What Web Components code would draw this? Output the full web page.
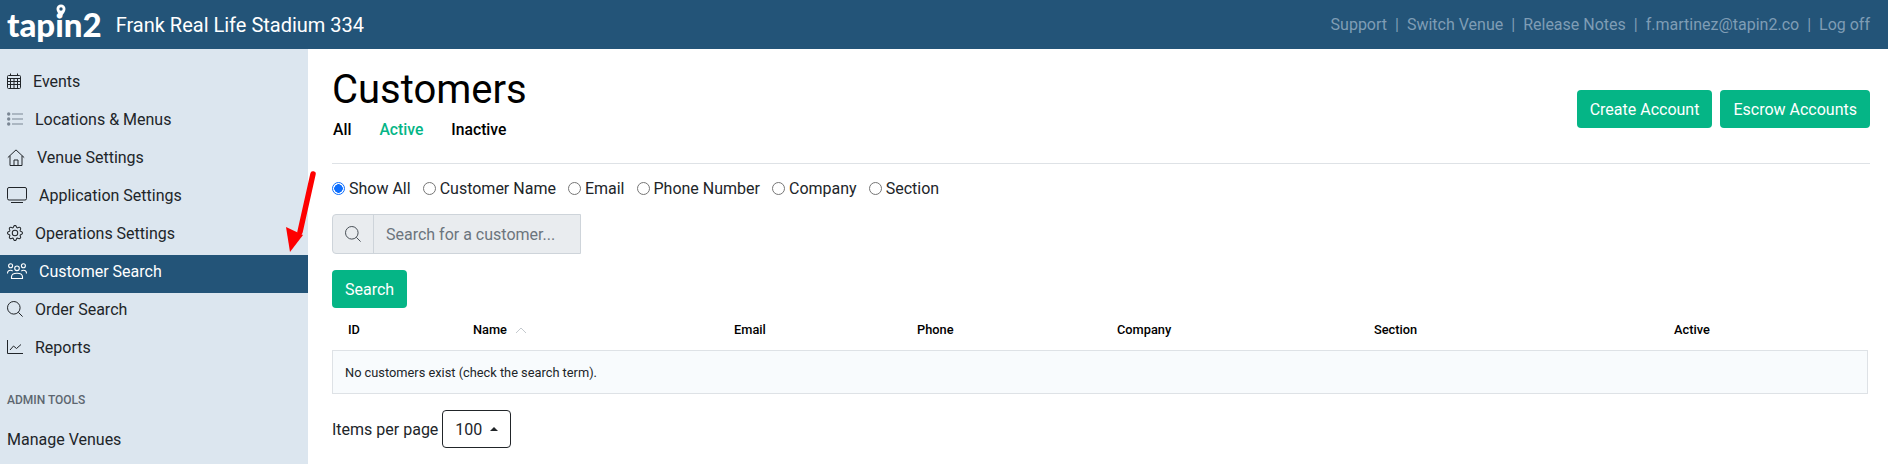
<!doctype html>
<html>
<head>
<meta charset="utf-8">
<title>Customers</title>
<style>
  html, body { margin: 0; height: 100%; background: #fff; overflow: hidden; }
  body { font-family: Roboto, "Liberation Sans", sans-serif; color: #212529; }
</style>
</head>
<body>
<app-shell>
  <top-bar slot="top"></top-bar>
  <side-nav slot="side"></side-nav>
  <customers-page slot="main"></customers-page>
</app-shell>

<script>
function define(name, html) {
  customElements.define(name, class extends HTMLElement {
    connectedCallback() {
      if (this.shadowRoot) return;
      this.attachShadow({ mode: 'open' }).innerHTML = typeof html === 'function' ? html(this) : html;
    }
  });
}

const ICONS = {
  calendar: '<svg width="14" height="16" viewBox="0 0 14 16" fill="none" stroke="#212529"><rect x=".5" y="2.500" width="13" height="13" rx="1"/><path d="M.5 5.500h13M.5 8.500h13M.5 11.500h13M3.500 5.500v10M7 5.500v10M10.500 5.500v10M3.500 .5v2M10.500 .5v2"/></svg>',
  list: '<svg width="16" height="14" viewBox="0 0 16 14" fill="none" stroke="#7b8794"><path d="M5 2h11M5 7h11M5 12h11"/><g fill="#7b8794" stroke="none"><circle cx="1.700" cy="2" r="1.700"/><circle cx="1.700" cy="7" r="1.700"/><circle cx="1.700" cy="12" r="1.700"/></g></svg>',
  house: '<svg width="18" height="17" viewBox="0 0 18 17" fill="none" stroke="#212529"><path d="M.8 8.600 9 .9l8.200 7.700M3 6.800v9.700h12V6.800M7 16.500v-5.500h4v5.500"/></svg>',
  tv: '<svg width="20" height="16" viewBox="0 0 20 16" fill="none" stroke="#212529"><rect x=".5" y=".5" width="19" height="12.500" rx="1.500"/><path d="M4 15.500h12"/></svg>',
  gear: '<svg width="16" height="16" viewBox="0 0 16 16" fill="#212529"><path d="M8 4.754a3.246 3.246 0 1 0 0 6.492 3.246 3.246 0 0 0 0-6.492zM5.754 8a2.246 2.246 0 1 1 4.492 0 2.246 2.246 0 0 1-4.492 0z"/><path d="M9.796 1.343c-.527-1.790-3.065-1.790-3.592 0l-.094.319a.873.873 0 0 1-1.255.52l-.292-.16c-1.640-.892-3.433.902-2.540 2.541l.159.292a.873.873 0 0 1-.52 1.255l-.319.094c-1.790.527-1.790 3.065 0 3.592l.319.094a.873.873 0 0 1 .52 1.255l-.16.292c-.892 1.640.901 3.434 2.541 2.540l.292-.159a.873.873 0 0 1 1.255.52l.094.319c.527 1.790 3.065 1.790 3.592 0l.094-.319a.873.873 0 0 1 1.255-.52l.292.16c1.640.893 3.434-.902 2.540-2.541l-.159-.292a.873.873 0 0 1 .52-1.255l.319-.094c1.790-.527 1.790-3.065 0-3.592l-.319-.094a.873.873 0 0 1-.52-1.255l.16-.292c.893-1.640-.902-3.433-2.541-2.540l-.292.159a.873.873 0 0 1-1.255-.52l-.094-.319zm-2.633.283c.246-.835 1.428-.835 1.674 0l.094.319a1.873 1.873 0 0 0 2.693 1.115l.291-.16c.764-.415 1.600.42 1.184 1.185l-.159.292a1.873 1.873 0 0 0 1.116 2.692l.318.094c.835.246.835 1.428 0 1.674l-.319.094a1.873 1.873 0 0 0-1.115 2.693l.16.291c.415.764-.42 1.600-1.185 1.184l-.291-.159a1.873 1.873 0 0 0-2.693 1.116l-.094.318c-.246.835-1.428.835-1.674 0l-.094-.319a1.873 1.873 0 0 0-2.692-1.115l-.292.16c-.764.415-1.600-.42-1.184-1.185l.159-.291A1.873 1.873 0 0 0 1.945 8.930l-.319-.094c-.835-.246-.835-1.428 0-1.674l.319-.094A1.873 1.873 0 0 0 3.060 4.377l-.16-.292c-.415-.764.42-1.600 1.185-1.184l.292.159a1.873 1.873 0 0 0 2.692-1.115l.094-.319z"/></svg>',
  people: '<svg width="20" height="16" viewBox="0 0 20 16" fill="none" stroke="#fff" stroke-width="1.100"><circle cx="3.600" cy="2.800" r="2"/><circle cx="10" cy="5.300" r="2.300"/><circle cx="16.400" cy="2.800" r="2"/><path d="M.5 10.500c0-2 1.300-3.200 3-3.200.9 0 1.600.2 2.200.8M19.500 10.500c0-2-1.300-3.200-3-3.200-.9 0-1.600.2-2.200.8M4.500 15.500v-1.500c0-2.300 2.400-3.700 5.500-3.700s5.500 1.400 5.500 3.700v1.500z"/></svg>',
  search: '<svg width="16" height="16" viewBox="0 0 16 16" fill="none" stroke="#212529"><circle cx="6.800" cy="6.800" r="6.300"/><path d="m11.300 11.300 4.300 4.300"/></svg>',
  graph: '<svg width="16" height="14" viewBox="0 0 16 14" fill="none" stroke="#212529"><path d="M.5 0v13.500H16M3 10l3.500-4 3 2.500L14 4.500"/></svg>'
};

define('app-shell', `
  <style>
    :host { display: grid; grid-template-columns: 308px 1fr; grid-template-rows: 49px 1fr; height: 464px; position: relative; }
    .top { grid-column: 1 / 3; }
    .arrow { position: absolute; left: 280px; top: 165px; }
  </style>
  <div class="top"><slot name="top"></slot></div>
  <slot name="side"></slot>
  <slot name="main"></slot>
  <svg class="arrow" width="40" height="92" viewBox="0 0 40 92">
    <path d="M33 9 20 67" stroke="#fe0000" stroke-width="5.500" stroke-linecap="round" fill="none"/>
    <path d="M6 62 23 70 10 87z" fill="#fe0000"/>
  </svg>
`);

define('top-bar', `
  <style>
    :host { display: flex; align-items: center; height: 49px; background: #235478; color: #fff; padding: 0 18px 0 7px; box-sizing: border-box; }
    .logo { position: relative; font: 900 33px/49px Lato, sans-serif; margin-right: 14px; }
    .pin { position: absolute; left: 48px; top: 4px; }
    .venue { font-size: 20px; flex: 1; }
    .links { display: flex; gap: 8px; font-size: 16px; color: #7f9db5; }
  </style>
  <span class="logo">tapin2<svg class="pin" width="12" height="13" viewBox="0 0 11 13"><path fill-rule="evenodd" fill="#fff" d="M5.500 13C3 9.500 1 7.500 1 5a4.500 4.500 0 0 1 9 0c0 2.500-2 4.500-4.500 8zm0-6.300a1.700 1.700 0 1 0 0-3.400 1.700 1.700 0 0 0 0 3.400z"/></svg></span>
  <span class="venue">Frank Real Life Stadium 334</span>
  <span class="links"><span>Support</span><span>|</span><span>Switch Venue</span><span>|</span><span>Release Notes</span><span>|</span><span>f.martinez@tapin2.co</span><span>|</span><span>Log off</span></span>
`);

define('nav-item', el => `
  <style>
    :host { display: flex; align-items: center; height: 38px; padding: 0 0 6px 7px; box-sizing: border-box; font-size: 16px; color: #212529; }
    :host([active]) { background: #235478; color: #fff; }
    .ic { display: flex; margin-right: 12px; }
  </style>
  <span class="ic">${ICONS[el.getAttribute('icon')] || ''}</span><slot></slot>
`);

define('side-nav', `
  <style>
    :host { display: block; background: #dce6ef; padding-top: 16px; }
    .head { font-size: 12px; line-height: 14px; font-weight: 500; color: #5c6670; margin: 24px 0 13px 7px; }
    .plain { display: flex; align-items: center; height: 38px; padding-left: 7px; font-size: 16px; }
  </style>
  <nav-item icon="calendar">Events</nav-item>
  <nav-item icon="list">Locations &amp; Menus</nav-item>
  <nav-item icon="house">Venue Settings</nav-item>
  <nav-item icon="tv">Application Settings</nav-item>
  <nav-item icon="gear">Operations Settings</nav-item>
  <nav-item icon="people" active>Customer Search</nav-item>
  <nav-item icon="search">Order Search</nav-item>
  <nav-item icon="graph">Reports</nav-item>
  <div class="head">ADMIN TOOLS</div>
  <div class="plain">Manage Venues</div>
`);

define('green-btn', `
  <style>
    :host { display: flex; align-items: center; width: fit-content; height: 38px; padding: 0 13px; background: #05b586; color: #fff; border-radius: 4px; font-size: 16px; box-sizing: border-box; }
  </style>
  <slot></slot>
`);

define('radio-opt', `
  <style>
    :host { display: inline-flex; align-items: center; gap: 4px; font-size: 16px; }
    i { width: 13px; height: 13px; border-radius: 50%; border: 1px solid #767676; box-sizing: border-box; background: #fff; }
    :host([checked]) i { border: 1.500px solid #0d6efd; background: radial-gradient(circle, #0d6efd 0 4px, #fff 4.500px); }
  </style>
  <i></i><slot></slot>
`);

define('customers-page', `
  <style>
    :host { display: block; padding: 0 18px 0 24px; min-width: 0; }
    .head { display: flex; justify-content: space-between; height: 114px; border-bottom: 1px solid #dee2e6; }
    h1 { font-size: 40px; font-weight: 400; color: #000; margin: 17px 0 0; line-height: 48px; }
    .tabs { display: flex; gap: 28px; font-size: 15.700px; font-weight: 500; color: #000; margin: 6px 0 0 1px; }
    .tabs .on { color: #05b586; }
    .btns { display: flex; gap: 8px; margin-top: 41px; align-self: flex-start; }
    .radios { display: flex; gap: 12px; margin-top: 14px; height: 20px; align-items: center; }
    .input { display: flex; width: 249px; height: 40px; margin-top: 16px; background: #e9ecef; border: 1px solid #ced4da; border-radius: 4px 0 0 4px; box-sizing: border-box; font-size: 16px; color: #6c757d; }
    .input .s { width: 40px; display: flex; align-items: center; justify-content: center; border-right: 1px solid #ced4da; }
    .input .t { padding-left: 12px; align-self: center; }
    .search { margin-top: 16px; }
    .cols { display: grid; grid-template-columns: 125px 261px 183px 200px 257px 300px 1fr; padding-left: 16px; height: 42px; align-items: center; font-size: 12.800px; font-weight: 500; color: #000; }
    .sort { display: inline-block; margin-left: 8px; }
    .empty { height: 44px; margin-right: 2px; border: 1px solid #dee2e6; background: #f8fbfd; box-sizing: border-box; display: flex; align-items: center; padding-left: 12px; font-size: 12.800px; }
    .pager { display: flex; align-items: center; gap: 4px; margin-top: 16px; font-size: 16px; }
    .sel { width: 69px; height: 38px; border: 1px solid #212529; border-radius: 4px; box-sizing: border-box; display: flex; align-items: center; justify-content: center; gap: 8px; }
    .sel i { border: 4px solid transparent; border-bottom: 4px solid #212529; border-top: 0; }
  </style>
  <div class="head">
    <div>
      <h1>Customers</h1>
      <div class="tabs"><span>All</span><span class="on">Active</span><span>Inactive</span></div>
    </div>
    <div class="btns"><green-btn>Create Account</green-btn><green-btn>Escrow Accounts</green-btn></div>
  </div>
  <div class="radios">
    <radio-opt checked>Show All</radio-opt>
    <radio-opt>Customer Name</radio-opt>
    <radio-opt>Email</radio-opt>
    <radio-opt>Phone Number</radio-opt>
    <radio-opt>Company</radio-opt>
    <radio-opt>Section</radio-opt>
  </div>
  <div class="input"><span class="s"><svg width="16" height="16" viewBox="0 0 16 16" fill="none" stroke="#495057"><circle cx="6.800" cy="6.800" r="6.300"/><path d="m11.300 11.300 4.300 4.300"/></svg></span><span class="t">Search for a customer...</span></div>
  <green-btn class="search">Search</green-btn>
  <div class="cols">
    <span>ID</span>
    <span>Name<svg class="sort" width="12" height="7" viewBox="0 0 12 7" fill="none" stroke="#c4c9ce"><path d="m1 6 5-5 5 5"/></svg></span>
    <span>Email</span><span>Phone</span><span>Company</span><span>Section</span><span>Active</span>
  </div>
  <div class="empty">No customers exist (check the search term).</div>
  <div class="pager"><span>Items per page</span><span class="sel">100<i></i></span></div>
`);
</script>
</body>
</html>
